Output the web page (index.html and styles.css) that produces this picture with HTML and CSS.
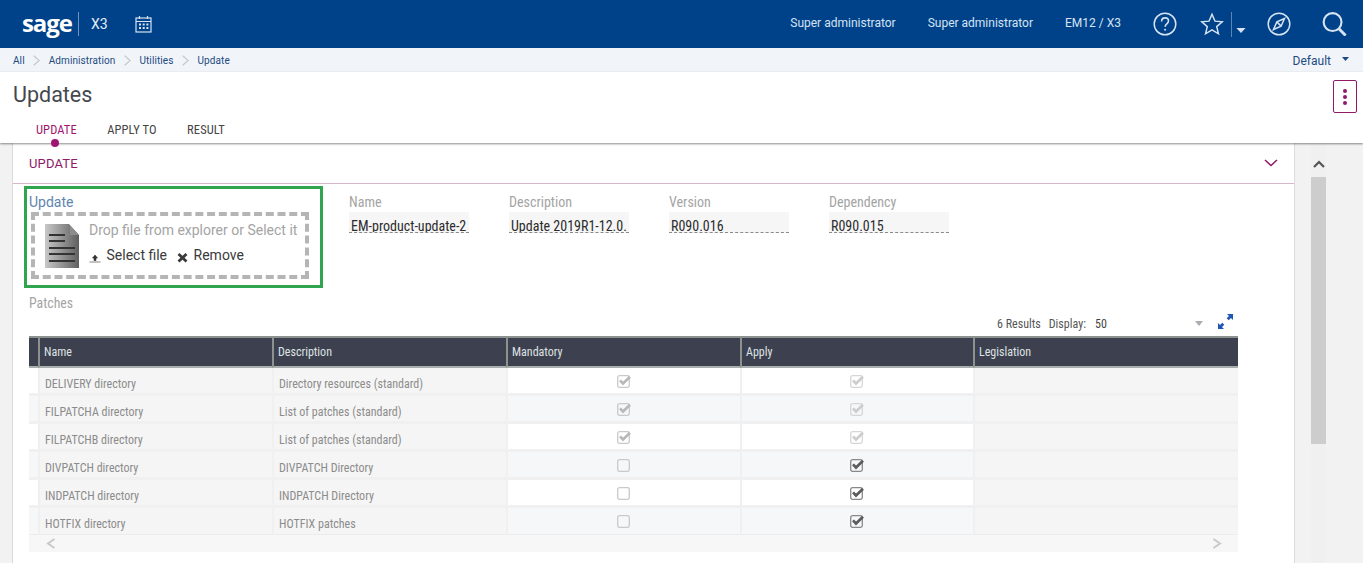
FILE: index.html
```html
<!DOCTYPE html>
<html lang="en">
<head>
<meta charset="utf-8">
<title>Updates</title>
<link rel="stylesheet" href="styles.css">
</head>
<body>
<header class="topbar">
  <div class="brand"><span class="logo">sage</span><span class="brand-sep"></span><span class="product">X3</span></div>
  <svg class="cal" width="17" height="18" viewBox="0 0 17 18" fill="none" stroke="#d5e3f2" stroke-width="1.2"><rect x="1" y="3" width="15" height="14"/><path d="M1 6.5h15M4.5 1v3M12.500 1v3" /><path d="M4 9.5h2M7.700 9.5h2M11.400 9.500h2M4 13h2M7.700 13h2M11.400 13h2" stroke-width="1.800"/></svg>
  <div class="top-right">
    <span class="top-link">Super administrator</span>
    <span class="top-link">Super administrator</span>
    <span class="top-link">EM12 / X3</span>
    <svg class="ic-help" width="24" height="24" viewBox="0 0 26 26" fill="none" stroke="#d5e3f2" stroke-width="1.6"><circle cx="13" cy="13" r="11.7"/><path d="M9.300 10.200c0-2.300 1.600-3.800 3.800-3.800s3.700 1.400 3.700 3.400c0 3-3.700 3.100-3.700 6.200" stroke-width="1.700"/><circle cx="13.100" cy="19.200" r="1.100" fill="#d5e3f2" stroke="none"/></svg>
    <svg class="ic-star" width="24" height="24" viewBox="0 0 26 25" fill="none" stroke="#d5e3f2" stroke-width="1.6"><path d="M13 2l3.200 7.400 8 .7-6.100 5.200 1.900 7.800-7-4.200-7 4.200 1.900-7.800-6.100-5.200 8-.7z"/></svg>
    <span class="fav-sep"></span>
    <svg class="ic-caret" width="10" height="5" viewBox="0 0 11 6"><path d="M0 0h11L5.500 6z" fill="#d5e3f2"/></svg>
    <svg class="ic-compass" width="24" height="24" viewBox="0 0 26 26" fill="none" stroke="#d5e3f2" stroke-width="1.600"><circle cx="13" cy="13" r="11.700"/><path d="M19 7l-8.300 3.700L7 19l8.300-3.700zM10.700 10.700l4.600 4.600"/></svg>
    <svg class="ic-search" width="25" height="24" viewBox="0 0 26 25" fill="none" stroke="#d5e3f2"><circle cx="11" cy="10.500" r="9.300" stroke-width="2.200"/><path d="M17.600 17.500l7 7" stroke-width="3"/></svg>
  </div>
</header>

<nav class="crumbs">
  <span>All</span><svg class="chev" width="7" height="11" viewBox="0 0 7 11" fill="none" stroke="#c4c8cc" stroke-width="1.200"><path d="M.7 .7l5.500 4.800L.7 10.300"/></svg>
  <span>Administration</span><svg class="chev" width="7" height="11" viewBox="0 0 7 11" fill="none" stroke="#c4c8cc" stroke-width="1.200"><path d="M.7 .7l5.500 4.800L.7 10.300"/></svg>
  <span>Utilities</span><svg class="chev" width="7" height="11" viewBox="0 0 7 11" fill="none" stroke="#c4c8cc" stroke-width="1.200"><path d="M.7 .7l5.500 4.800L.7 10.300"/></svg>
  <span>Update</span>
  <div class="default-view"><span>Default</span><svg width="7" height="4" viewBox="0 0 7 4"><path d="M0 0h7L3.500 4z" fill="#1d4a80"/></svg></div>
</nav>

<section class="titlebar">
  <div class="title-row">
    <h1>Updates</h1>
    <button class="more" type="button" aria-label="More"><i></i><i></i><i></i></button>
  </div>
  <div class="tabs">
    <span class="tab active">UPDATE</span>
    <span class="tab">APPLY TO</span>
    <span class="tab">RESULT</span>
  </div>
</section>

<div class="workspace">
  <div class="gutter"></div>
  <main class="content">
    <div class="section-head">
      <span>UPDATE</span>
      <svg width="14" height="8" viewBox="0 0 14 8" fill="none" stroke="#8e1a69" stroke-width="1.600"><path d="M1 1l6 5.500L13 1"/></svg>
    </div>
    <div class="form-row">
      <div class="upload">
        <div class="upload-label">Update</div>
        <div class="dropzone">
          <div class="doc">
            <i class="l1"></i><i class="l2"></i><i class="l3"></i><i class="l4"></i><i class="l5"></i>
          </div>
          <div class="drop-text">
            <div class="drop-hint">Drop file from explorer or Select it</div>
            <div class="drop-actions">
              <span class="act"><svg width="12" height="11" viewBox="0 0 12 11"><path d="M6 3l2.500 3H7v2.500H5V6H3.500zM0.500 10h11" fill="#333" stroke="#333" stroke-width=".6"/></svg>Select file</span>
              <span class="act"><svg width="11" height="11" viewBox="0 0 11 11" stroke="#3a3a3a" stroke-width="2.800"><path d="M1.500 2l8 7.500M9.500 2l-8 7.500"/></svg>Remove</span>
            </div>
          </div>
        </div>
      </div>
      <div class="field"><label>Name</label><div class="val">EM-product-update-2</div></div>
      <div class="field"><label>Description</label><div class="val">Update 2019R1-12.0.</div></div>
      <div class="field"><label>Version</label><div class="val">R090.016</div></div>
      <div class="field"><label>Dependency</label><div class="val">R090.015</div></div>
    </div>
    <div class="patches-label">Patches</div>
    <div class="grid-tools">
      <span>6 Results</span><span class="disp">Display:</span><span class="disp-val">50</span>
      <svg class="disp-caret" width="8" height="5" viewBox="0 0 8 5"><path d="M0 0h8L4 5z" fill="#a9adb1"/></svg>
      <svg class="expand" width="15" height="15" viewBox="0 0 15 15" fill="#1f57b5"><path d="M9 0h6v6l-2-2-2.300 2.300-2-2L11 2zM0 15V9l2 2 2.300-2.300 2 2L4 13l2 2z"/></svg>
    </div>
    <table class="grid">
      <colgroup><col class="c0"><col class="c1"><col class="c1"><col class="c1"><col class="c4"><col></colgroup>
      <thead><tr><th></th><th>Name</th><th>Description</th><th>Mandatory</th><th>Apply</th><th>Legislation</th></tr></thead>
      <tbody>
        <tr><td></td><td class="ro">DELIVERY directory</td><td class="ro">Directory resources (standard)</td><td class="chk"><svg class="cb" viewBox="0 0 14 13"><use href="#on-light"/></svg></td><td class="chk"><svg class="cb" viewBox="0 0 14 13"><use href="#on-lighter"/></svg></td><td class="ro"></td></tr>
        <tr><td></td><td class="ro">FILPATCHA directory</td><td class="ro">List of patches (standard)</td><td class="chk"><svg class="cb" viewBox="0 0 14 13"><use href="#on-light"/></svg></td><td class="chk"><svg class="cb" viewBox="0 0 14 13"><use href="#on-lighter"/></svg></td><td class="ro"></td></tr>
        <tr><td></td><td class="ro">FILPATCHB directory</td><td class="ro">List of patches (standard)</td><td class="chk"><svg class="cb" viewBox="0 0 14 13"><use href="#on-light"/></svg></td><td class="chk"><svg class="cb" viewBox="0 0 14 13"><use href="#on-lighter"/></svg></td><td class="ro"></td></tr>
        <tr><td></td><td class="ro">DIVPATCH directory</td><td class="ro">DIVPATCH Directory</td><td class="chk"><svg class="cb" viewBox="0 0 14 13"><use href="#off"/></svg></td><td class="chk"><svg class="cb" viewBox="0 0 14 13"><use href="#on-dark"/></svg></td><td class="ro"></td></tr>
        <tr><td></td><td class="ro">INDPATCH directory</td><td class="ro">INDPATCH Directory</td><td class="chk"><svg class="cb" viewBox="0 0 14 13"><use href="#off"/></svg></td><td class="chk"><svg class="cb" viewBox="0 0 14 13"><use href="#on-dark"/></svg></td><td class="ro"></td></tr>
        <tr><td></td><td class="ro">HOTFIX directory</td><td class="ro">HOTFIX patches</td><td class="chk"><svg class="cb" viewBox="0 0 14 13"><use href="#off"/></svg></td><td class="chk"><svg class="cb" viewBox="0 0 14 13"><use href="#on-dark"/></svg></td><td class="ro"></td></tr>
      </tbody>
    </table>
    <div class="hscroll">
      <svg width="10" height="11" viewBox="0 0 10 11" fill="none" stroke="#c9c9c9" stroke-width="2"><path d="M8.500 1L2 5.500 8.500 10"/></svg>
      <svg width="10" height="11" viewBox="0 0 10 11" fill="none" stroke="#c9c9c9" stroke-width="2"><path d="M1.500 1L8 5.500 1.500 10"/></svg>
    </div>
  </main>
  <aside class="rail">
    <div class="vscroll">
      <svg width="12" height="8" viewBox="0 0 12 8" fill="none" stroke="#555" stroke-width="2.200"><path d="M1 7l5-5 5 5"/></svg>
      <div class="thumb"></div>
    </div>
  </aside>
</div>

<svg class="defs" width="0" height="0">
  <defs>
    <g id="off"><rect x=".7" y=".7" width="11.600" height="11.600" rx="1.800" fill="none" stroke="#c9c9c9" stroke-width="1.300"/></g>
    <g id="on-light"><rect x=".7" y=".7" width="11.600" height="11.600" rx="1.800" fill="none" stroke="#c9c9c9" stroke-width="1.300"/><path d="M3 5.300l3 3.200L13 1.800" fill="none" stroke="#b9b9b9" stroke-width="2.700"/></g>
    <g id="on-lighter"><rect x=".7" y=".7" width="11.600" height="11.600" rx="1.800" fill="none" stroke="#d6d6d6" stroke-width="1.300"/><path d="M3 5.300l3 3.200L13 1.800" fill="none" stroke="#cdcdcd" stroke-width="2.700"/></g>
    <g id="on-dark"><rect x=".7" y=".7" width="11.600" height="11.600" rx="1.800" fill="none" stroke="#888" stroke-width="1.300"/><path d="M3 5.300l3 3.200L13 1.800" fill="none" stroke="#5c5c5c" stroke-width="2.700"/></g>
  </defs>
</svg>
</body>
</html>
```
FILE: styles.css
```css
* { box-sizing: border-box; }
html, body { margin: 0; height: 563px; overflow: hidden; }
body { font-family: Roboto, "Liberation Sans", sans-serif; background: #fff; color: #333; font-size: 12px; }

.topbar { height: 48px; background: #00428a; display: flex; align-items: center; padding-left: 22px; color: #d5e3f2; }
.brand { display: flex; align-items: center; width: 113px; }
.logo { font-family: "Open Sans", sans-serif; font-weight: 700; font-size: 24px; letter-spacing: -1.100px; color: #fff; line-height: 24px; width: 56px; margin-top: -3px; }
.brand-sep { width: 1px; height: 24px; background: #6f93bb; margin-right: 12px; }
.product { font-size: 14px; color: #e6eef6; width: 24px; }
.cal { margin-top: -1px; }
.top-right { margin-left: auto; display: flex; align-items: center; height: 100%; }
.top-link { font-size: 12px; margin-right: 32px; margin-top: -2px; }
.ic-star { margin-left: 23px; }
.fav-sep { width: 1px; height: 25px; background: #5e86b4; margin-left: 7px; }
.ic-caret { margin: 13px 0 0 4px; }
.ic-compass { margin-left: 21px; }
.ic-search { margin: 0 16px 0 31px; }

.crumbs { height: 24px; background: #f1f5fa; display: flex; align-items: center; padding-left: 13px; font-size: 10px; color: #1d4a80; letter-spacing: .1px; }
.chev { margin: 0 8.500px; }
.default-view { margin-left: auto; display: flex; align-items: center; font-size: 12px; letter-spacing: 0; margin-top: 1px; }
.default-view svg { margin: -3px 14px 0 11px; }

.titlebar { height: 71px; position: relative; z-index: 1; box-shadow: 0 1px 2px rgba(0,0,0,.45); background: #fff; }
.title-row { display: flex; justify-content: space-between; align-items: flex-start; height: 44px; padding: 8px 6px 0 13px; }
h1 { margin: 1px 0 0; font-size: 21.500px; font-weight: 400; color: #45484f; line-height: 28px; }
.more { width: 24px; height: 33px; border: 1px solid #8e1a69; border-radius: 2px; background: #fff; padding: 0; display: flex; flex-direction: column; align-items: center; justify-content: center; gap: 2px; }
.more i { width: 4px; height: 4px; border-radius: 50%; background: #8e1a69; }
.tabs { display: flex; padding-left: 36px; gap: 30.500px; font-stretch: 75%; }
.tab { font-size: 12.500px; letter-spacing: .1px; line-height: 28px; height: 27px; color: #444; position: relative; }
.tab.active { color: #a0156f; }
.tab.active::after { content: ""; position: absolute; left: 15px; bottom: -4px; width: 8px; height: 8px; border-radius: 50%; background: #a0156f; }

.workspace { display: flex; height: 420px; }
.gutter { width: 13px; background: #f2f2f2; border-right: 1px solid #d9d9d9; }
.content { width: 1281px; padding-left: 16px; overflow: hidden; }
.section-head { height: 41px; margin-left: -16px; padding: 0 16px; border-bottom: 1px solid #d8b6cd; display: flex; align-items: center; justify-content: space-between; color: #8e1a69; font-size: 13px; letter-spacing: .15px; }
.form-row { display: flex; margin-top: 2px; height: 102px; }
.upload { width: 299px; height: 102px; margin-left: -5px; border: 3px solid #2fa54f; padding: 5px 0 0 2px; flex: none; margin-right: 26px; }
.upload-label { font-size: 14px; line-height: 16px; color: #5e85ad; }
.dropzone { margin: 2px 0 0 2px; width: 278px; height: 67px; border: 4px dashed #b5b5b5; display: flex; padding: 4px 0 0 10px; }
.doc { width: 34px; height: 44px; position: relative; background: linear-gradient(90deg, #c8c8c8, #5f5f5f); clip-path: polygon(0 0, 24px 0, 34px 11px, 34px 100%, 0 100%); flex: none; margin-top: 4px; }
.doc::after { content: ""; position: absolute; top: 1px; right: 0; width: 9px; height: 10px; background: #8d8d8d; clip-path: polygon(0 0, 100% 100%, 0 100%); }
.doc i { position: absolute; left: 4px; height: 2px; background: #333; width: 26px; }
.doc .l1 { top: 10px; width: 16px; }
.doc .l2 { top: 16px; width: 16px; }
.doc .l3 { top: 23px; }
.doc .l4 { top: 29px; }
.doc .l5 { top: 36px; }
.drop-text { margin-left: 10px; white-space: nowrap; }
.drop-hint { font-size: 14px; color: #a4a4a4; line-height: 20px; }
.drop-actions { display: flex; gap: 10px; margin-top: 5px; font-size: 14px; color: #3a3a3a; line-height: 20px; }
.act { display: flex; align-items: center; gap: 5.500px; }
.act svg { margin-top: 4px; }
.field { width: 120px; margin-right: 40px; padding-top: 9px; font-stretch: 75%; }
.field label { display: block; font-size: 14px; line-height: 15px; color: #a4a4a4; }
.val { margin-top: 2px; height: 21px; background: #f6f6f6; border-bottom: 1px dashed #8a8a8a; font-size: 14px; line-height: 28px; color: #2c2c2c; padding-left: 2px; white-space: nowrap; overflow: hidden; }
.patches-label { margin-top: 7px; font-size: 13.800px; line-height: 16px; color: #a4a4a4; font-stretch: 75%; }
.grid-tools { height: 25px; width: 1209px; display: flex; align-items: center; padding-left: 968px; font-size: 12px; color: #555; font-stretch: 75%; }
.disp { margin-left: 8px; }
.disp-val { margin-left: 9px; width: 100px; color: #444; }
.expand { margin-left: 15px; margin-top: -4px; }
.grid { border-collapse: separate; border-spacing: 0; table-layout: fixed; width: 1209px; font-stretch: 75%; }
.c0 { width: 9px; }
.c1 { width: 234px; }
.c4 { width: 233px; }
.grid th { height: 32px; background: #3d414f; color: #dfe1e4; font-weight: 400; font-size: 12px; text-align: left; padding: 0 0 0 4px; border-left: 2px solid #8e928e; border-top: 2px solid #8e928e; border-bottom: 2px solid #a9adad; }
.grid th:first-child { border-left: 0; }
.grid td { height: 28px; background: #fff; border-left: 2px solid #f0f0f0; border-bottom: 3px solid #f0f0f0; padding: 7px 0 0 5px; font-size: 12px; color: #8c8c8c; white-space: nowrap; }
.grid td:first-child { border-left: 0; padding: 0; }
.grid tbody tr:nth-child(even) td { background: #f6f7f9; }
.grid td.ro, .grid tbody tr:nth-child(even) td.ro { background: #f5f5f5; }
.grid tbody tr:last-child td { height: 27px; border-bottom: 1px solid #ececec; padding-top: 5px; }
.grid td.chk, .grid tbody tr:last-child td.chk { padding: 0; }
.cb { width: 14px; height: 13px; display: block; margin: 1px auto 0; position: relative; left: -.5px; }
.hscroll { width: 1209px; height: 17px; background: #f7f7f7; display: flex; align-items: center; justify-content: space-between; padding: 0 16px 0 17px; }

.rail { flex: 1; background: #f2f2f2; border-left: 1px solid #dcdcdc; padding-left: 16px; }
.vscroll { width: 15px; height: 100%; background: #f0f0f0; padding-top: 17px; }
.vscroll svg { display: block; margin-left: 1.500px; }
.thumb { background: #cdcdcd; height: 267px; margin-top: 9px; }
.defs { position: absolute; }
```
